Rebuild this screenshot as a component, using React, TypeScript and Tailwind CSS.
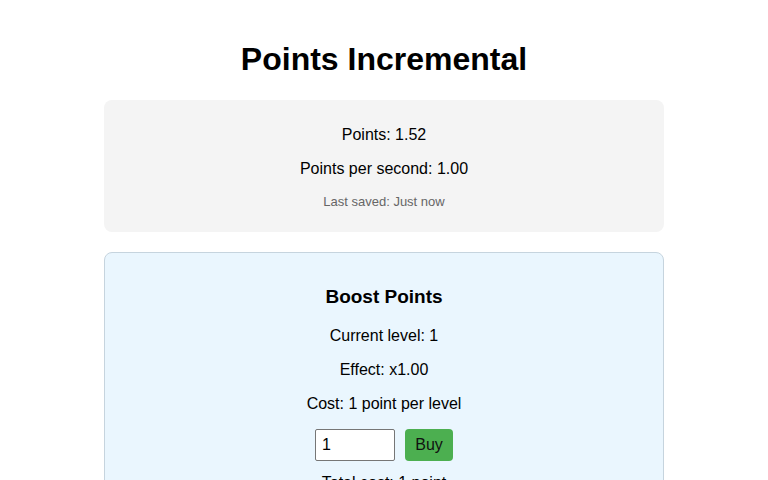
export default function App() {
  return (
    <div className="min-h-screen bg-white px-5 pt-[41px] font-['Liberation_Sans',Arial,sans-serif] text-black">
      <h1 className="text-center text-[32px] font-bold leading-[37px]">Points Incremental</h1>

      <div className="mx-auto mt-[22px] flex w-[560px] flex-col items-center rounded-lg bg-[#f4f4f4] pb-[23px] pt-[26px]">
        <p className="text-base leading-[18px]">Points: 1.52</p>
        <p className="mt-4 text-base leading-[18px]">Points per second: 1.00</p>
        <p className="mt-4 text-[13px] leading-[15px] text-[#666]">Last saved: Just now</p>
      </div>

      <div className="mx-auto mt-5 flex w-[560px] flex-col items-center rounded-lg border border-[#c6d4de] bg-[#eaf6fe] pb-5 pt-[33px]">
        <h3 className="text-[19px] font-bold leading-[22px]">Boost Points</h3>
        <p className="mt-[19px] text-base leading-[18px]">Current level: 1</p>
        <p className="mt-4 text-base leading-[18px]">Effect: x1.00</p>
        <p className="mt-4 text-base leading-[18px]">Cost: 1 point per level</p>
        <div className="mt-[16px] flex items-center gap-[10px]">
          <input
            type="number"
            defaultValue={1}
            className="h-8 w-20 rounded-[2px] border border-[#767676] bg-white px-[6px] text-base text-black"
          />
          <button className="h-8 w-12 rounded bg-[#4caf50] text-base text-[#111]">Buy</button>
        </div>
        <p className="mt-[13px] text-base leading-[18px]">Total cost: 1 point</p>
      </div>
    </div>
  );
}
